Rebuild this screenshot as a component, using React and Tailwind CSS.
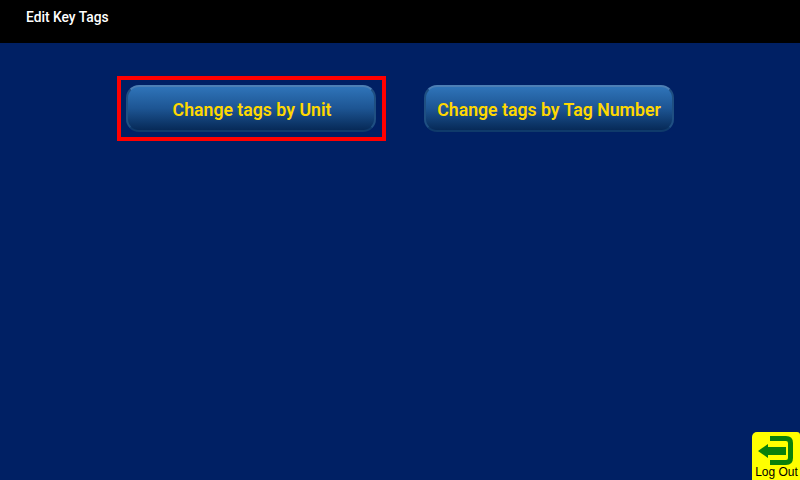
function TagButton({ children, className }) {
  return (
    <button className={`w-[250px] h-[47px] rounded-[13px] border-2 border-t-[#4d7fb5] border-x-[#1f4f82] border-b-[#0f3a6b] bg-gradient-to-b from-[#2f74b9] via-[#1d5593] to-[#072a58] text-[#ffd800] text-[17.7px] font-semibold ${className}`}>
      {children}
    </button>
  );
}

export default function App() {
  return (
    <div className="flex flex-col w-[800px] h-[480px] bg-[#002064] overflow-hidden font-['Roboto',sans-serif]">
      {/* Top bar */}
      <div className="h-[43px] bg-black pl-[26px] pt-[9px] text-[13.8px] leading-[17px] font-medium text-white">
        Edit Key Tags
      </div>

      <div className="flex-1 flex flex-col justify-between">
        <div className="flex pt-[33px] pl-[117px]">
          <div className="flex items-center pl-[5px] border-[4px] border-[#ff0000] w-[269px] h-[65px]">
            <TagButton className="pt-[3px] pl-[2px]">Change tags by Unit</TagButton>
          </div>
          <div className="mt-[9px] ml-[38px]">
            <TagButton className="pt-[3px]">Change tags by Tag Number</TagButton>
          </div>
        </div>

        {/* Log out */}
        <div className="self-end w-[48px] h-[48px] rounded-tl-[5px] rounded-tr-[3px] bg-[#ffff00] flex flex-col items-center">
          <svg width="38" height="30" viewBox="0 0 38 30" fill="none" className="mt-[4px]">
            <path d="M13 2.500h16q4.500 0 4.500 4.500v15q0 4.500-4.500 4.500H13" stroke="#0a800a" strokeWidth="5" />
            <path d="M1 15l10-7v3h18v8H11v3z" fill="#0a800a" />
          </svg>
          <span className="pl-[1px] font-['Liberation_Sans',sans-serif] text-[12px] leading-[13px] text-black whitespace-nowrap">
            Log Out
          </span>
        </div>
      </div>
    </div>
  );
}
